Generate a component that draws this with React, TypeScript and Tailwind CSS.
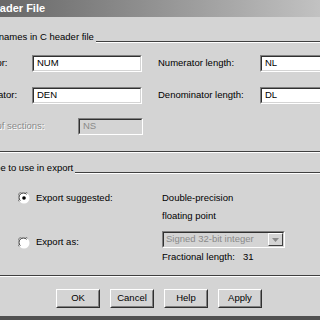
import React from 'react';

const sunken =
  'border border-t-[#808080] border-l-[#808080] border-b-white border-r-white';
const sunkenInner =
  'border border-t-[#303030] border-l-[#303030] border-b-[#d4d4d4] border-r-[#d4d4d4]';

function TextBox({ value, width, disabled }: { value: string; width: string; disabled?: boolean }) {
  return (
    <div className={`${sunken} ${width} h-[17px] shrink-0`}>
      <div
        className={`${sunkenInner} h-full pl-[3px] flex items-center ${
          disabled ? 'bg-[#d4d4d4] text-[#8a8a8a]' : 'bg-white text-black'
        }`}
      >
        {value}
      </div>
    </div>
  );
}

function Etched({ className = '' }: { className?: string }) {
  return <div className={`h-0 border-t border-b border-t-[#404040] border-b-white ${className}`} />;
}

function Radio({ checked }: { checked?: boolean }) {
  return (
    <svg width="12" height="12" viewBox="0 0 12 12" className="shrink-0">
      <circle cx="6" cy="6" r="5.5" fill="#ffffff" />
      <path d="M1.2 9.5 A5.5 5.5 0 0 1 9.5 1.2" stroke="#808080" strokeWidth="1" fill="none" />
      <path d="M2.3 8.6 A4.4 4.4 0 0 1 8.6 2.3" stroke="#303030" strokeWidth="1" fill="none" />
      {checked && <circle cx="6" cy="6" r="1.8" fill="#000000" />}
    </svg>
  );
}

function Button({ label }: { label: string }) {
  return (
    <div className="w-[44px] h-[19px] border border-t-white border-l-white border-b-[#303030] border-r-[#303030]">
      <div className="h-full flex items-center justify-center border border-t-[#d4d4d4] border-l-[#d4d4d4] border-b-[#808080] border-r-[#808080]">
        {label}
      </div>
    </div>
  );
}

export default function App() {
  return (
    <div className="w-[320px] h-[320px] overflow-hidden bg-[#d4d4d4] flex flex-col font-['Liberation_Sans',Arial,sans-serif] text-[9.5px] text-black whitespace-nowrap">
      {/* Title bar */}
      <div className="h-[17px] shrink-0 bg-linear-to-r from-[#686868] to-[#c2c2c2] flex items-center">
        <span className="ml-[-13px] text-white font-bold text-[11px]">header File</span>
      </div>

      {/* Variable names group */}
      <div className="mt-[14px] h-[12px] flex items-end">
        <span className="ml-[-38px] leading-[12px] self-center">Variable names in C header file</span>
        <Etched className="flex-1 ml-[2px]" />
      </div>

      <div className="mt-[12px] flex items-center">
        <span className="ml-[-40px] w-[72px] shrink-0">Numerator:</span>
        <TextBox value="NUM" width="w-[110px]" />
        <span className="ml-[16px] w-[102px] shrink-0">Numerator length:</span>
        <TextBox value="NL" width="w-[80px]" />
      </div>

      <div className="mt-[15px] flex items-center">
        <span className="ml-[-40px] w-[72px] shrink-0">Denominator:</span>
        <TextBox value="DEN" width="w-[110px]" />
        <span className="ml-[16px] w-[102px] shrink-0">Denominator length:</span>
        <TextBox value="DL" width="w-[80px]" />
      </div>

      <div className="mt-[14px] flex items-center">
        <span className="ml-[-40px] w-[118px] shrink-0 text-[#8a8a8a] [text-shadow:1px_1px_0_#ffffff]">
          Number of sections:
        </span>
        <TextBox value="NS" width="w-[65px]" disabled />
      </div>

      <Etched className="mt-[16px]" />

      {/* Data type group */}
      <div className="mt-[9px] h-[12px] flex items-end">
        <span className="ml-[-35px] leading-[12px] self-center">Data type to use in export</span>
        <Etched className="flex-1 ml-[2px]" />
      </div>

      <div className="mt-[15px] flex">
        <div className="w-[162px] h-[18px] shrink-0 flex items-center pl-[18px] gap-[6px]">
          <Radio checked />
          <span>Export suggested:</span>
        </div>
        <div className="leading-[18px]">
          <div>Double-precision</div>
          <div>floating point</div>
        </div>
      </div>

      <div className="mt-[6px] flex">
        <div className="w-[162px] h-[17px] mt-[3px] shrink-0 flex items-center pl-[18px] gap-[6px]">
          <Radio />
          <span>Export as:</span>
        </div>
        <div>
          <div className={`${sunken} w-[123px] h-[17px]`}>
            <div className={`${sunkenInner} h-full flex items-center justify-between pl-[2px] text-[#8a8a8a]`}>
              <span>Signed 32-bit integer</span>
              <div className="w-[15px] h-full border border-t-white border-l-white border-b-[#404040] border-r-[#404040] flex items-center justify-center">
                <svg width="7" height="4" viewBox="0 0 7 4">
                  <path d="M0 0 H7 L3.5 4 Z" fill="#8a8a8a" />
                </svg>
              </div>
            </div>
          </div>
          <div className="leading-[16px] mt-[1px] flex">
            <span className="w-[81px]">Fractional length:</span>
            <span>31</span>
          </div>
        </div>
      </div>

      <Etched className="mt-[10px]" />

      {/* Buttons */}
      <div className="mt-[12px] flex pl-[56px] gap-[10px]">
        <Button label="OK" />
        <Button label="Cancel" />
        <Button label="Help" />
        <Button label="Apply" />
      </div>

      <div className="mt-auto h-[4px] bg-[#505050]" />
    </div>
  );
}
